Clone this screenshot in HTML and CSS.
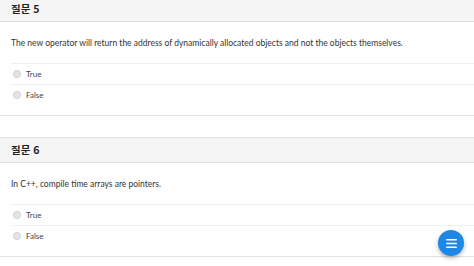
FILE: index.html
```html
<!DOCTYPE html>
<html lang="ko">
<head>
    <meta charset="UTF-8">
    <meta name="viewport" content="width=device-width, initial-scale=1.0">
    <title>퀴즈</title>
    <link rel="stylesheet" href="styles.css">
</head>
<body>
    <div class="question first">
        <div class="question-header">질문 5</div>
        <div class="question-text">The new operator will return the address of dynamically allocated objects and not the objects themselves.</div>
        <div class="answers">
            <label class="answer"><span class="radio"></span>True</label>
            <label class="answer"><span class="radio"></span>False</label>
        </div>
    </div>

    <div class="question">
        <div class="question-header">질문 6</div>
        <div class="question-text">In C++, compile time arrays are pointers.</div>
        <div class="answers">
            <label class="answer"><span class="radio"></span>True</label>
            <label class="answer"><span class="radio"></span>False</label>
        </div>
    </div>

    <div class="fab">
        <svg width="11" height="9" viewBox="0 0 11 9">
            <rect x="0" y="0" width="11" height="1.5" rx="0.75" fill="#fff"/>
            <rect x="0" y="3.75" width="11" height="1.5" rx="0.75" fill="#fff"/>
            <rect x="0" y="7.5" width="11" height="1.5" rx="0.75" fill="#fff"/>
        </svg>
    </div>
</body>
</html>
```

FILE: styles.css
```css
body {
    margin: 0;
    background: #fff;
    color: #333;
    font-family: Lato, "Noto Sans CJK KR", sans-serif;
    overflow: hidden;
}
.question {
    border-top: 1px solid #e2e2e2;
    border-bottom: 1px solid #e2e2e2;
    margin-bottom: 21px;
}
.question.first {
    margin-top: -4px;
}
.question-header {
    height: 24px;
    line-height: 24px;
    padding: 0 11px;
    background: #f5f5f5;
    border-bottom: 1px solid #dedede;
    font-family: "Noto Sans CJK KR", sans-serif;
    font-weight: bold;
    font-size: 10.5px;
    color: #222;
}
.question-text {
    padding: 16px 11px 14px;
    font-size: 8.5px;
    line-height: 11px;
    color: #333;
}
.answers {
    margin-left: 11px;
    padding-bottom: 10px;
}
.answer {
    display: flex;
    align-items: center;
    height: 19px;
    padding-bottom: 1px;
    border-top: 1px solid #efefef;
    font-size: 8px;
    color: #444;
}
.radio {
    width: 6px;
    height: 6px;
    border-radius: 50%;
    background: #e4e4e4;
    border: 1px solid #d0d0d0;
    margin: 0 5px 0 2px;
}
.fab {
    position: absolute;
    left: 438px;
    top: 230px;
    width: 26px;
    height: 26px;
    border-radius: 50%;
    background: #1e88e5;
    box-shadow: 0 2px 4px rgba(0, 0, 0, 0.3);
    display: flex;
    align-items: center;
    justify-content: center;
}
```
